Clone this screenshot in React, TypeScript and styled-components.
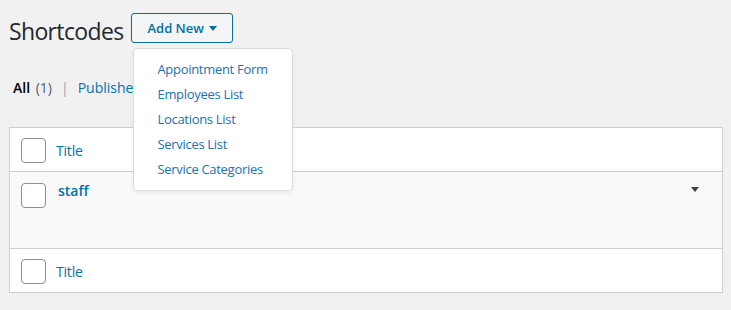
import React from 'react'
import styled, { createGlobalStyle } from 'styled-components'

const GlobalStyle = createGlobalStyle`
  html, body {
    margin: 0;
    padding: 0;
    background: #f1f1f1;
  }
  body {
    font-family: 'Open Sans', 'Noto Sans', sans-serif;
    font-size: 13px;
    color: #23282d;
  }
`

const Wrap = styled.div`
  padding: 0 8px 0 9px;
`

const Header = styled.div`
  display: flex;
  align-items: flex-start;
  gap: 8px;
  padding-top: 13px;
`

const Heading = styled.h1`
  margin: 3px 0 0 0;
  font-size: 23px;
  font-weight: 400;
  line-height: 30px;
  letter-spacing: -0.65px;
  color: #23282d;
`

const ButtonWrap = styled.div`
  position: relative;
`

const AddButton = styled.button`
  display: flex;
  align-items: center;
  gap: 5px;
  height: 30px;
  padding: 0 15px;
  border: 1px solid #0071a1;
  border-radius: 3px;
  background: #f3f5f6;
  color: #0071a1;
  font-family: inherit;
  font-size: 13px;
  font-weight: 600;
  cursor: pointer;
`

const Caret = styled.span<{ color?: string }>`
  display: inline-block;
  width: 0;
  height: 0;
  border-left: 4px solid transparent;
  border-right: 4px solid transparent;
  border-top: 5px solid ${({ color }) => color ?? '#0071a1'};
`

const Menu = styled.ul`
  position: absolute;
  top: 35px;
  left: 2px;
  z-index: 10;
  width: 160px;
  margin: 0;
  padding: 8px 0;
  list-style: none;
  background: #fff;
  border: 1px solid #dcdcde;
  border-radius: 4px;
  box-shadow: 0 2px 5px rgba(0, 0, 0, 0.06);
  box-sizing: border-box;
`

const MenuItem = styled.li`
  padding-left: 23px;
  line-height: 25px;
  font-size: 13px;
  letter-spacing: -0.3px;
  color: #2271b1;
  white-space: nowrap;
`

const Filters = styled.ul`
  display: flex;
  align-items: baseline;
  gap: 9px;
  margin: 0;
  padding: 31px 0 0 4px;
  list-style: none;
  font-size: 14px;
  line-height: 22px;
`

const FilterCurrent = styled.li`
  color: #000;
  font-weight: 600;
`

const Count = styled.span`
  margin-left: 2px;
  color: #555d66;
  font-weight: 400;
`

const Sep = styled.li`
  color: #a0a5aa;
`

const FilterLink = styled.li`
  color: #0073aa;
`

const Table = styled.div`
  margin-top: 28px;
  background: #fff;
  border: 1px solid #ccd0d4;
  box-shadow: 0 1px 1px rgba(0, 0, 0, 0.04);
`

const Row = styled.div<{ height: number; alt?: boolean; last?: boolean }>`
  display: flex;
  align-items: flex-start;
  height: ${({ height }) => height}px;
  padding: 0 23px 0 11px;
  box-sizing: border-box;
  background: ${({ alt }) => (alt ? '#f9f9f9' : '#fff')};
  border-bottom: ${({ last }) => (last ? 'none' : '1px solid #ccd0d4')};
`

const Check = styled.span<{ top: number }>`
  flex: none;
  width: 25px;
  height: 25px;
  margin-top: ${({ top }) => top}px;
  border: 1px solid #8c8f94;
  border-radius: 4px;
  background: #fff;
  box-sizing: border-box;
`

const TitleLink = styled.span<{ top: number }>`
  margin: ${({ top }) => top}px 0 0 10px;
  font-size: 14px;
  line-height: 25px;
  letter-spacing: -0.2px;
  color: #0073aa;
`

const RowTitle = styled.span`
  margin: 9px 0 0 12px;
  font-size: 14px;
  font-weight: 600;
  line-height: 20px;
  color: #0073aa;
`

const Toggle = styled.span`
  margin: 15px 0 0 auto;
  display: flex;
`

export default function App() {
  const items = ['Appointment Form', 'Employees List', 'Locations List', 'Services List', 'Service Categories']
  return (
    <>
      <GlobalStyle />
      <Wrap>
        <Header>
          <Heading>Shortcodes</Heading>
          <ButtonWrap>
            <AddButton>
              Add New <Caret />
            </AddButton>
            <Menu>
              {items.map((item) => (
                <MenuItem key={item}>{item}</MenuItem>
              ))}
            </Menu>
          </ButtonWrap>
        </Header>
        <Filters>
          <FilterCurrent>
            All <Count>(1)</Count>
          </FilterCurrent>
          <Sep>|</Sep>
          <FilterLink>Published</FilterLink>
        </Filters>
        <Table>
          <Row height={44}>
            <Check top={10} />
            <TitleLink top={10}>Title</TitleLink>
          </Row>
          <Row height={77} alt>
            <Check top={11} />
            <RowTitle>staff</RowTitle>
            <Toggle>
              <Caret color="#3c434a" />
            </Toggle>
          </Row>
          <Row height={43} last>
            <Check top={10} />
            <TitleLink top={10}>Title</TitleLink>
          </Row>
        </Table>
      </Wrap>
    </>
  )
}
